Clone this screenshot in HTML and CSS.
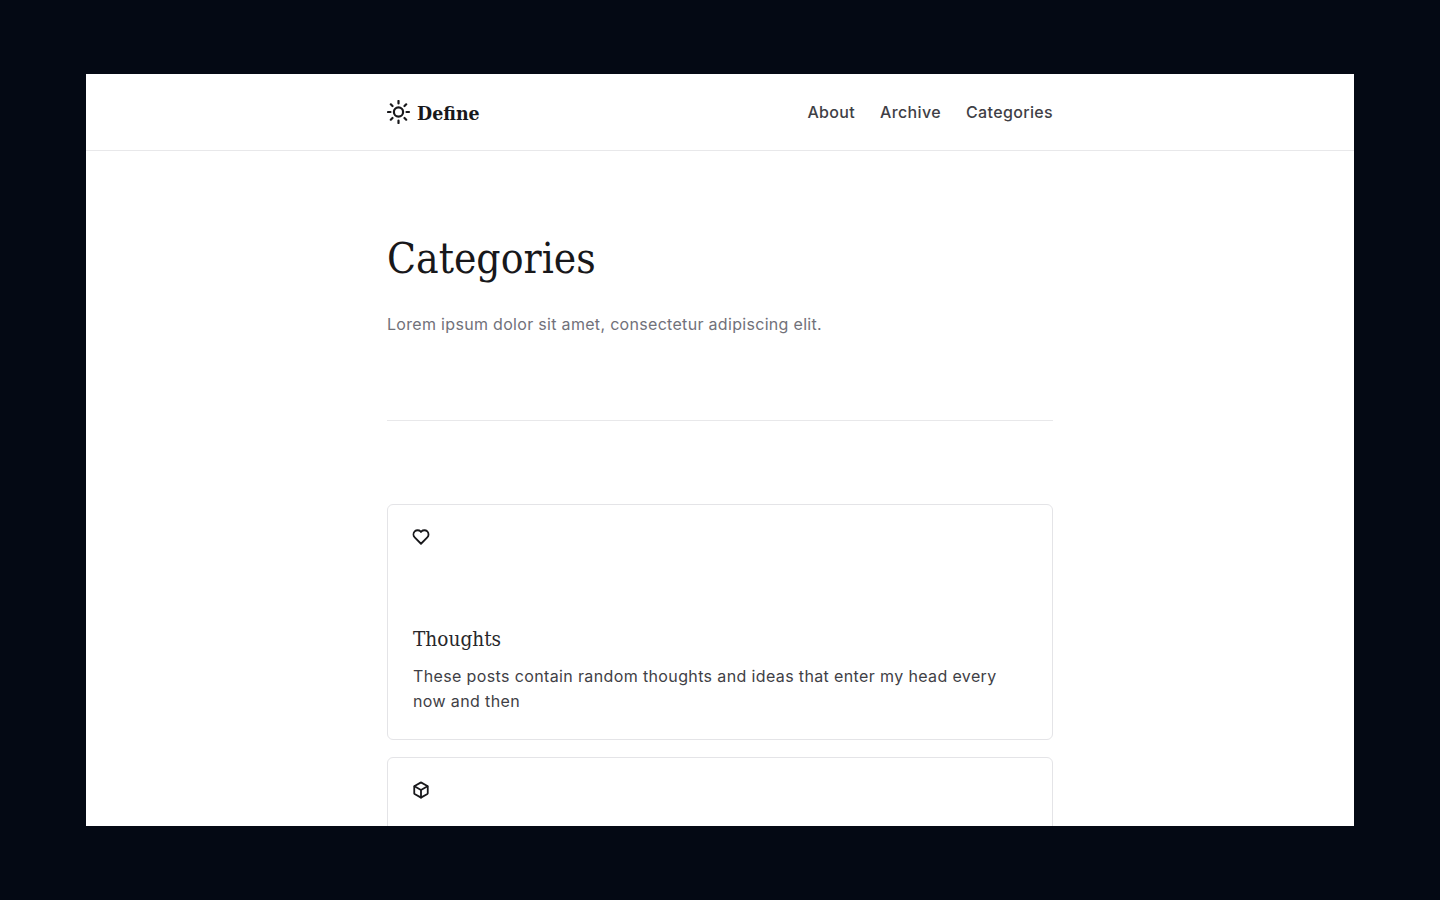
FILE: index.html
```html
<!DOCTYPE html>
<html lang="en">
<head>
<meta charset="utf-8">
<title>Categories</title>
<link rel="stylesheet" href="styles.css">
</head>
<body>
<div class="frame">
  <header class="site-header">
    <div class="container header-row">
      <a class="logo" href="#">
        <svg class="logo-icon" width="24" height="24" viewBox="0 0 24 24" fill="none" stroke="currentColor" stroke-width="2.2" stroke-linecap="round" stroke-linejoin="round"><circle cx="11.500" cy="12" r="4.600"/><path d="M11.500 1v2.500M11.500 20.500V23M3.800 4.300l1.700 1.700M17.500 18l1.700 1.700M1 12h2.500M19.500 12H22M3.800 19.700L5.500 18M17.500 6l1.700-1.700"/></svg>
        <span class="logo-text">Define</span>
      </a>
      <nav class="nav">
        <a href="#">About</a>
        <a href="#">Archive</a>
        <a href="#">Categories</a>
      </nav>
    </div>
  </header>
  <main class="container">
    <section class="intro">
      <h1>Categories</h1>
      <p>Lorem ipsum dolor sit amet, consectetur adipiscing elit.</p>
    </section>
    <section class="cards">
      <article class="card">
        <svg class="card-icon" width="18" height="18" viewBox="0 0 24 24" fill="none" stroke="currentColor" stroke-width="2.4" stroke-linecap="round" stroke-linejoin="round"><path d="M20.400 4.600a5.500 5.500 0 0 0-7.800 0L12 5.300l-.6-.7a5.500 5.500 0 0 0-7.800 7.800L12 21l8.400-8.600a5.500 5.500 0 0 0 0-7.800z"/></svg>
        <h2>Thoughts</h2>
        <p>These posts contain random thoughts and ideas that enter my head every now and then</p>
      </article>
      <article class="card">
        <svg class="card-icon" width="18" height="18" viewBox="0 0 24 24" fill="none" stroke="currentColor" stroke-width="2.4" stroke-linecap="round" stroke-linejoin="round"><path d="M21 16.500V7.500a1 1 0 0 0-.5-.87l-8-4.500a1 1 0 0 0-1 0l-8 4.500a1 1 0 0 0-.5.87v9a1 1 0 0 0 .5.87l8 4.500a1 1 0 0 0 1 0l8-4.500a1 1 0 0 0 .5-.87z"/><path d="M3.300 7 12 12l8.700-5M12 22V12"/></svg>
      </article>
    </section>
  </main>
</div>
</body>
</html>
```

FILE: styles.css
```css
* { box-sizing: border-box; }
html, body { margin: 0; height: 100%; }
body {
  background: #040914;
  padding: 74px 86px;
  font-family: Inter, "Liberation Sans", sans-serif;
  letter-spacing: 0.31px;
  overflow: hidden;
}
.frame {
  background: #fff;
  height: 752px;
  overflow: hidden;
}
.container {
  width: 666px;
  margin: 0 auto;
}
.site-header {
  height: 77px;
  border-bottom: 1px solid #e8e8ea;
}
.header-row {
  height: 76px;
  display: flex;
  align-items: center;
  justify-content: space-between;
}
.logo {
  display: flex;
  align-items: center;
  gap: 6px;
  color: #18181b;
  text-decoration: none;
}
.logo-text {
  font-family: "DejaVu Serif Condensed", "DejaVu Serif", serif;
  font-weight: 700;
  font-size: 19.4px;
  letter-spacing: 0;
  padding-top: 2px;
}
.nav {
  display: flex;
  gap: 25px;
}
.nav a {
  color: #3f3f46;
  text-decoration: none;
  font-size: 16px;
  font-weight: 450;
  letter-spacing: 0.35px;
}
.intro {
  padding-top: 78px;
  padding-bottom: 82px;
  border-bottom: 1px solid #e8e8ea;
}
h1 {
  margin: 0;
  font-family: "DejaVu Serif Condensed", "DejaVu Serif", serif;
  font-weight: 400;
  font-size: 42.2px;
  line-height: 60px;
  letter-spacing: 0;
  color: #18181b;
}
.intro p {
  margin: 21px 0 0;
  font-size: 16px;
  line-height: 28px;
  color: #71717a;
}
.cards {
  padding-top: 83px;
  display: flex;
  flex-direction: column;
  gap: 17px;
}
.card {
  border: 1px solid #e4e4e7;
  border-radius: 6px;
  padding: 23px 25px;
  height: 236px;
  color: #18181b;
}
.card-icon {
  display: block;
  margin-left: -1px;
}
.card h2 {
  margin: 79px 0 0;
  font-family: "DejaVu Serif Condensed", "DejaVu Serif", serif;
  font-weight: 400;
  font-size: 20.6px;
  line-height: 28px;
  letter-spacing: 0;
  color: #27272a;
}
.card p {
  margin: 11px 0 0;
  font-size: 16px;
  line-height: 25px;
  letter-spacing: 0.37px;
  color: #3f3f46;
}
```
